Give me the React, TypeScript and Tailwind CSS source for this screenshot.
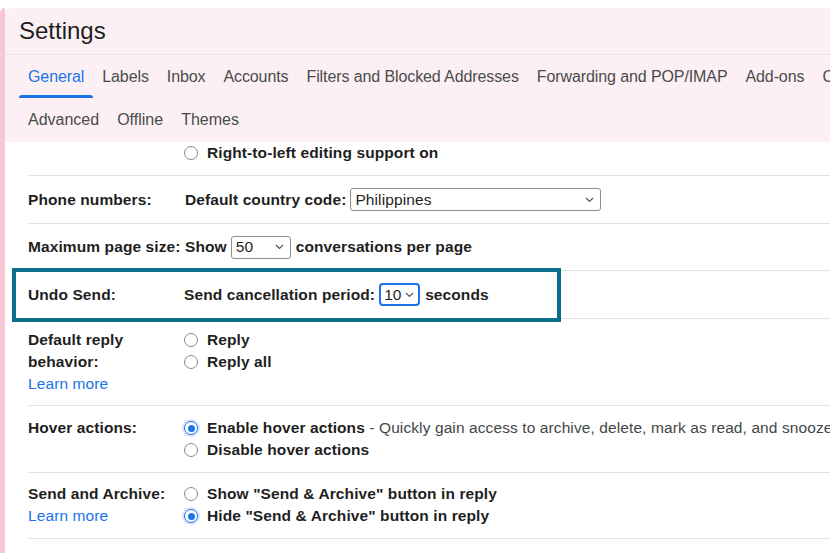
import React from 'react'

const tabsTop = ['General', 'Labels', 'Inbox', 'Accounts', 'Filters and Blocked Addresses', 'Forwarding and POP/IMAP', 'Add-ons', 'Chat and Meet']
const tabsBottom = ['Advanced', 'Offline', 'Themes']

function Radio({ checked = false }: { checked?: boolean }) {
  if (checked) {
    return (
      <span className="w-[14px] h-[14px] shrink-0 rounded-full border-[1.5px] border-[#1a73e8] flex items-center justify-center shadow-[0_0_0_2px_rgba(26,115,232,0.18)]">
        <span className="w-[7px] h-[7px] rounded-full bg-[#1a73e8]" />
      </span>
    )
  }
  return <span className="w-[14px] h-[14px] shrink-0 rounded-full border border-[#8a8a8a] bg-white" />
}

function Chevron() {
  return (
    <svg width="9" height="6" viewBox="0 0 9 6" className="shrink-0">
      <polyline points="1,1 4.5,4.5 8,1" fill="none" stroke="#555" strokeWidth="1.2" />
    </svg>
  )
}

function Option({ checked, children }: { checked?: boolean; children: React.ReactNode }) {
  return (
    <div className="flex items-center gap-[9px] h-[22px] whitespace-nowrap">
      <Radio checked={checked} />
      <span>{children}</span>
    </div>
  )
}

export default function App() {
  return (
    <div className="w-[830px] h-[553px] overflow-hidden bg-white pt-[8px] font-['Liberation_Sans',Arial,sans-serif] text-[#1f1f1f]">
      <div className="flex h-full">
        {/* pink edge */}
        <div className="w-[5px] shrink-0 bg-[#f7c7d3] rounded-tl-[6px]" />

        <div className="flex-1 min-w-0 overflow-hidden">
          {/* Header */}
          <div className="bg-[#fcf0f4] rounded-tl-[6px]">
            <div className="h-[47px] flex items-center pl-[14px] border-b border-[#efdfe5]">
              <h1 className="text-[24px] leading-none font-normal">Settings</h1>
            </div>
            <div className="flex pl-[14px] h-[43px] whitespace-nowrap">
              {tabsTop.map((t, i) => (
                <div
                  key={t}
                  className={`relative px-[9px] flex items-center text-[16px] tracking-[-0.1px] ${i === 0 ? 'text-[#1a73e8]' : 'text-[#4a4c4b]'}`}
                >
                  {t}
                  {i === 0 && <span className="absolute left-0 right-0 bottom-0 h-[3px] rounded-t-[3px] bg-[#1a73e8]" />}
                </div>
              ))}
            </div>
            <div className="flex pl-[14px] h-[44px] whitespace-nowrap">
              {tabsBottom.map((t) => (
                <div key={t} className="px-[9px] flex items-center text-[16px] text-[#4a4c4b]">
                  {t}
                </div>
              ))}
            </div>
          </div>

          {/* Body */}
          <div className="pl-[23px] text-[15.5px] font-bold leading-[22px] tracking-[0.1px]">
            <div className="flex pb-[11px] border-b border-[#e3e3e3]">
              <div className="w-[156px] shrink-0" />
              <Option>Right-to-left editing support on</Option>
            </div>

            <div className="flex items-center h-[48px] border-b border-[#e3e3e3]">
              <div className="w-[157px] shrink-0">Phone numbers:</div>
              <span className="whitespace-nowrap">Default country code:</span>
              <div className="ml-[4px] w-[251px] h-[23px] border border-[#8f8f8f] rounded-[3px] flex items-center justify-between pl-[4px] pr-[6px] font-normal">
                <span>Philippines</span>
                <Chevron />
              </div>
            </div>

            <div className="flex items-center h-[47px] border-b border-[#e3e3e3]">
              <div className="w-[157px] shrink-0 whitespace-nowrap">Maximum page size:</div>
              <span>Show</span>
              <div className="ml-[4px] w-[60px] h-[23px] border border-[#8f8f8f] rounded-[3px] flex items-center justify-between pl-[4px] pr-[6px] font-normal">
                <span>50</span>
                <Chevron />
              </div>
              <span className="ml-[5px] whitespace-nowrap">conversations per page</span>
            </div>

            <div className="relative flex items-center h-[48px] border-b border-[#e3e3e3]">
              <div className="w-[156px] shrink-0">Undo Send:</div>
              <span className="whitespace-nowrap">Send cancellation period:</span>
              <div className="ml-[4px] w-[41px] h-[23px] border-2 border-[#1a73e8] rounded-[4px] flex items-center justify-between pl-[3px] pr-[4px] font-normal">
                <span>10</span>
                <Chevron />
              </div>
              <span className="ml-[5px]">seconds</span>
              <div className="absolute left-[-16px] top-[-3px] w-[549px] h-[54px] border-[4px] border-[#0d6e8b]" />
            </div>

            <div className="flex pt-[10px] pb-[10px] border-b border-[#e3e3e3]">
              <div className="w-[156px] shrink-0">
                <div>Default reply</div>
                <div>behavior:</div>
                <div className="font-normal text-[#1a73e8]">Learn more</div>
              </div>
              <div>
                <Option>Reply</Option>
                <Option>Reply all</Option>
              </div>
            </div>

            <div className="flex pt-[11px] pb-[11px] border-b border-[#e3e3e3]">
              <div className="w-[156px] shrink-0">Hover actions:</div>
              <div className="min-w-0">
                <Option checked>
                  Enable hover actions
                  <span className="font-normal text-[#444746]"> - Quickly gain access to archive, delete, mark as read, and snooze on hover.</span>
                </Option>
                <Option>Disable hover actions</Option>
              </div>
            </div>

            <div className="flex pt-[10px] pb-[11px] border-b border-[#e3e3e3]">
              <div className="w-[156px] shrink-0">
                <div className="whitespace-nowrap">Send and Archive:</div>
                <div className="font-normal text-[#1a73e8]">Learn more</div>
              </div>
              <div>
                <Option>Show "Send &amp; Archive" button in reply</Option>
                <Option checked>Hide "Send &amp; Archive" button in reply</Option>
              </div>
            </div>
          </div>
        </div>
      </div>
    </div>
  )
}
